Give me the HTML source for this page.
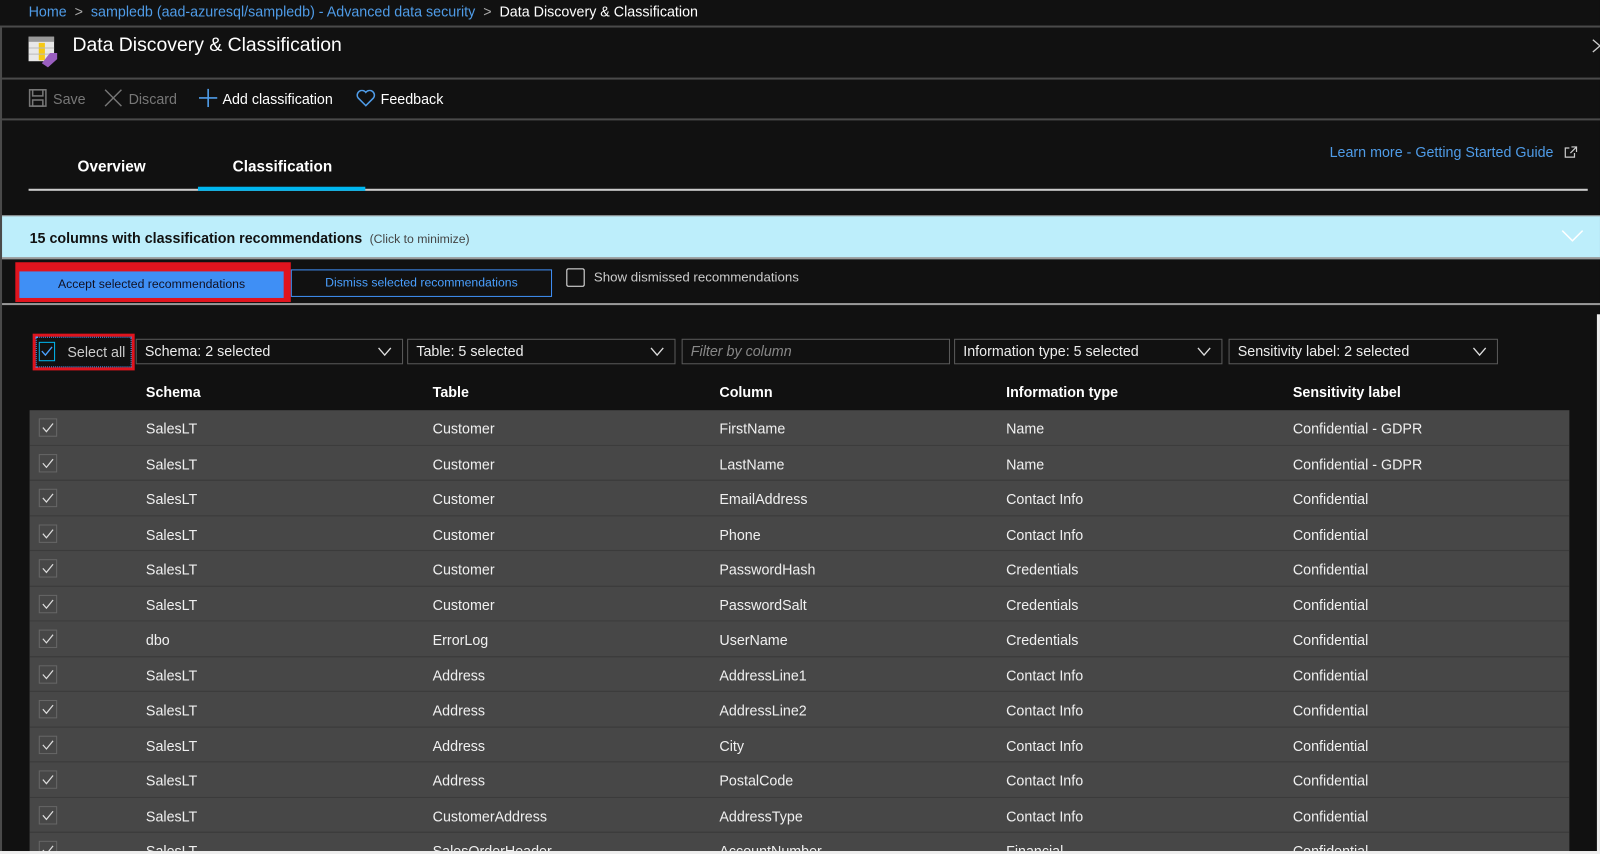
<!DOCTYPE html>
<html><head><meta charset="utf-8"><style>
*{margin:0;padding:0;box-sizing:border-box}
html,body{width:1600px;height:854px;overflow:hidden;background:#111}
#w{position:absolute;left:0;top:0;width:1568px;height:837px;transform:scale(1.0204);transform-origin:0 0;background:#111;overflow:hidden;font-family:"Liberation Sans",sans-serif;color:#fff;font-size:14px}
.a{position:absolute;white-space:nowrap}
.hl{position:absolute;height:2px;background:#555}
.dd{position:absolute;top:332px;height:25px;border:1px solid #5a5a5a;font-size:14px;line-height:23px;padding-left:8px;color:#eee}
.dd svg{position:absolute;right:10px;top:7px}
.row{position:absolute;left:29px;width:1509px;height:34.5px;background:#474747;border-bottom:1px solid #3b3b3b;font-size:14px;color:#f0f0f0}
.row span{position:absolute;top:10px}
.cb{position:absolute;left:9px;top:8px;width:18px;height:18px;border:1px solid #666}
.cb svg{position:absolute;left:2px;top:3px}
.th{position:absolute;top:376px;font-weight:bold;font-size:14px}
</style></head><body><div id="w">
<div class="a" style="left:28px;top:3px;font-size:14px;color:#4f9ce8">Home <span style="color:#aaa">&nbsp;&gt;&nbsp;</span> sampledb (aad-azuresql/sampledb) - Advanced data security <span style="color:#aaa">&nbsp;&gt;&nbsp;</span> <span style="color:#fff">Data Discovery &amp; Classification</span></div>
<div class="hl" style="left:0;top:25px;width:1568px;background:#4a4a4a"></div>
<div style="position:absolute;left:0;top:27px;width:2px;height:827px;background:#4a4a4a"></div>
<svg class="a" style="left:27px;top:35px" width="32" height="32" viewBox="0 0 32 32"><rect x="1" y="1" width="25" height="24" fill="#e8e8e8"/><rect x="1" y="1" width="25" height="5" fill="#999"/><rect x="11" y="7" width="6" height="17" fill="#f6c915"/><g stroke="#bbb" stroke-width="1"><line x1="1" y1="12" x2="26" y2="12"/><line x1="1" y1="18" x2="26" y2="18"/></g><path d="M14 27 L22 17 L29 17 L29 23 L20 31 Z" fill="#9a5fc0"/></svg>
<div class="a" style="left:71px;top:34px;font-size:19px">Data Discovery &amp; Classification</div>
<svg class="a" style="left:1560px;top:38px" width="10" height="14" viewBox="0 0 10 14" fill="none" stroke="#ccc" stroke-width="1.3"><path d="M1 1L8 7L1 13"/></svg>
<div class="hl" style="left:2px;top:76px;width:1568px;background:#4a4a4a"></div>
<svg class="a" style="left:28px;top:87px" width="18" height="18" viewBox="0 0 18 18" fill="none" stroke="#777" stroke-width="1.5"><rect x="1" y="1" width="16" height="16"/><rect x="4" y="1" width="10" height="6"/><rect x="4" y="11" width="10" height="6"/></svg>
<div class="a" style="left:52px;top:89px;color:#777">Save</div>
<svg class="a" style="left:102px;top:87px" width="18" height="18" viewBox="0 0 18 18" stroke="#777" stroke-width="1.4"><path d="M1 1L17 17M17 1L1 17"/></svg>
<div class="a" style="left:126px;top:89px;color:#777">Discard</div>
<svg class="a" style="left:195px;top:87px" width="18" height="18" viewBox="0 0 18 18" stroke="#4f9ce8" stroke-width="1.6"><path d="M9 0V18M0 9H18"/></svg>
<div class="a" style="left:218px;top:89px">Add classification</div>
<svg class="a" style="left:349px;top:88px" width="19" height="17" viewBox="0 0 19 17" fill="none" stroke="#4f9ce8" stroke-width="1.5"><path d="M9.5 15.5L2 8A4.3 4.3 0 0 1 9.5 2.5A4.3 4.3 0 0 1 17 8Z"/></svg>
<div class="a" style="left:373px;top:89px">Feedback</div>
<div class="hl" style="left:2px;top:116px;width:1568px;background:#4a4a4a"></div>
<div class="a" style="left:76px;top:155px;font-weight:bold;font-size:15px">Overview</div>
<div class="a" style="left:228px;top:155px;font-weight:bold;font-size:15px">Classification</div>
<div class="hl" style="left:28px;top:185px;width:1528px;background:#ccc"></div>
<div style="position:absolute;left:194px;top:183px;width:164px;height:4px;background:#00b7f0"></div>
<div class="a" style="left:1303px;top:141px;color:#4f9ce8">Learn more - Getting Started Guide</div>
<svg class="a" style="left:1533px;top:143px" width="13" height="12" viewBox="0 0 13 12" fill="none" stroke="#ccc" stroke-width="1.2"><path d="M5 2H1V11H10V7M7 1H12V6M12 1L6 7"/></svg>
<div style="position:absolute;left:2px;top:211px;width:1568px;height:43px;background:#bdeefb;border-top:1px solid #999;border-bottom:2px solid #999"></div>
<div class="a" style="left:29px;top:225px;color:#111;font-weight:bold;font-size:14px">15 columns with classification recommendations <span style="font-weight:normal;font-size:12px;color:#444">&nbsp;(Click to minimize)</span></div>
<svg class="a" style="left:1530px;top:225px" width="22" height="12" viewBox="0 0 22 12" fill="none" stroke="#fff" stroke-width="1.5"><path d="M1 1L11 11L21 1"/></svg>
<div style="position:absolute;left:15px;top:257px;width:270px;height:39px;background:#e0141e"></div>
<div class="a" style="left:19px;top:266px;width:259px;height:26px;background:#3f8ff5;color:#112;font-size:12px;text-align:center;line-height:24px">Accept selected recommendations</div>
<div class="a" style="left:285px;top:264px;width:256px;height:27px;border:1px solid #3f8ff5;color:#4aa0ff;font-size:12px;text-align:center;line-height:25px">Dismiss selected recommendations</div>
<div class="a" style="left:555px;top:263px;width:18px;height:18px;border:1.5px solid #eee;border-radius:2px"></div>
<div class="a" style="left:582px;top:264px;color:#ccc;font-size:13px">Show dismissed recommendations</div>
<div class="hl" style="left:2px;top:297px;width:1568px;background:#999"></div>
<div style="position:absolute;left:1565px;top:308px;width:3px;height:540px;background:#eee"></div>
<div style="position:absolute;left:32px;top:327px;width:100px;height:36px;background:#e0141e"></div>
<div style="position:absolute;left:35px;top:330px;width:94px;height:30px;background:#111;border:1px dotted #4aa0ff"></div>
<div class="a" style="left:38px;top:335px;width:16px;height:19px;border:1px solid #00b7f0"></div>
<svg class="a" style="left:40px;top:339px" width="12" height="10" viewBox="0 0 12 10" fill="none" stroke="#4aa0ff" stroke-width="1.3"><path d="M1 5L4.5 9L11 1"/></svg>
<div class="a" style="left:66px;top:337px;color:#ccc;font-size:14px">Select all</div>
<div class="dd" style="left:133px;width:262px">Schema: 2 selected<svg width="14" height="9" viewBox="0 0 14 9" fill="none" stroke="#ddd" stroke-width="1.3"><path d="M1 1L7 8L13 1"/></svg></div>
<div class="dd" style="left:399px;width:263px">Table: 5 selected<svg width="14" height="9" viewBox="0 0 14 9" fill="none" stroke="#ddd" stroke-width="1.3"><path d="M1 1L7 8L13 1"/></svg></div>
<div class="dd" style="left:668px;width:263px;color:#888;font-style:italic">Filter by column</div>
<div class="dd" style="left:935px;width:263px">Information type: 5 selected<svg width="14" height="9" viewBox="0 0 14 9" fill="none" stroke="#ddd" stroke-width="1.3"><path d="M1 1L7 8L13 1"/></svg></div>
<div class="dd" style="left:1204px;width:264px">Sensitivity label: 2 selected<svg width="14" height="9" viewBox="0 0 14 9" fill="none" stroke="#ddd" stroke-width="1.3"><path d="M1 1L7 8L13 1"/></svg></div>
<div class="th" style="left:143px">Schema</div>
<div class="th" style="left:424px">Table</div>
<div class="th" style="left:705px">Column</div>
<div class="th" style="left:986px">Information type</div>
<div class="th" style="left:1267px">Sensitivity label</div>
<div id="rows"></div>
<div style="position:absolute;left:0;top:834px;width:1600px;height:6px;background:#eee"></div>
</div>
<script>
var d=[["SalesLT","Customer","FirstName","Name","Confidential - GDPR"],["SalesLT","Customer","LastName","Name","Confidential - GDPR"],["SalesLT","Customer","EmailAddress","Contact Info","Confidential"],["SalesLT","Customer","Phone","Contact Info","Confidential"],["SalesLT","Customer","PasswordHash","Credentials","Confidential"],["SalesLT","Customer","PasswordSalt","Credentials","Confidential"],["dbo","ErrorLog","UserName","Credentials","Confidential"],["SalesLT","Address","AddressLine1","Contact Info","Confidential"],["SalesLT","Address","AddressLine2","Contact Info","Confidential"],["SalesLT","Address","City","Contact Info","Confidential"],["SalesLT","Address","PostalCode","Contact Info","Confidential"],["SalesLT","CustomerAddress","AddressType","Contact Info","Confidential"],["SalesLT","SalesOrderHeader","AccountNumber","Financial","Confidential"]];
var xs=[114,395,676,957,1238],h="";
d.forEach(function(r,i){h+='<div class="row" style="top:'+(402+i*34.5)+'px"><div class="cb"><svg width="12" height="10" viewBox="0 0 12 10" fill="none" stroke="#ddd" stroke-width="1.2"><path d="M1 5L4.5 9L11 1"/></svg></div>';r.forEach(function(c,j){h+='<span style="left:'+xs[j]+'px">'+c+'</span>'});h+='</div>'});
document.getElementById("rows").innerHTML=h;
</script>
</body></html>
